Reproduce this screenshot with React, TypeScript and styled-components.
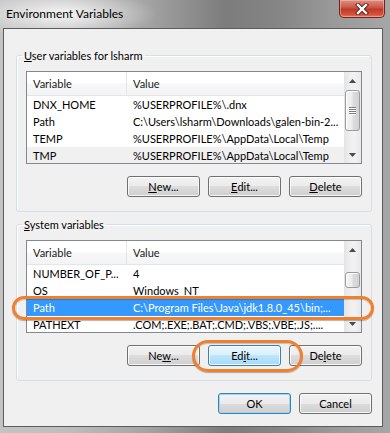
import React from 'react'
import styled, { createGlobalStyle } from 'styled-components'

type RowState = 'selected' | 'inactive'

interface EnvRow {
  name: string
  value: string
  state?: RowState
}

const userVars: EnvRow[] = [
  { name: 'DNX_HOME', value: '%USERPROFILE%\\.dnx' },
  { name: 'Path', value: 'C:\\Users\\lsharm\\Downloads\\galen-bin-2...' },
  { name: 'TEMP', value: '%USERPROFILE%\\AppData\\Local\\Temp' },
  { name: 'TMP', value: '%USERPROFILE%\\AppData\\Local\\Temp', state: 'inactive' },
]

const systemVars: EnvRow[] = [
  { name: 'NUMBER_OF_P...', value: '4' },
  { name: 'OS', value: 'Windows_NT' },
  { name: 'Path', value: 'C:\\Program Files\\Java\\jdk1.8.0_45\\bin;...', state: 'selected' },
  { name: 'PATHEXT', value: '.COM;.EXE;.BAT;.CMD;.VBS;.VBE;.JS;....' },
]

const GlobalStyle = createGlobalStyle`
  html, body {
    margin: 0;
    padding: 0;
  }
  body {
    font-family: Lato, "Liberation Sans", sans-serif;
    font-size: 11px;
    color: #000;
  }
`

function ArrowGlyph({ down }: { down?: boolean }) {
  return (
    <svg width="7" height="4" viewBox="0 0 7 4">
      <path d={down ? 'M0 0H7L3.5 4Z' : 'M0 4H7L3.5 0Z'} fill="#4a4a4a" />
    </svg>
  )
}

function CloseGlyph() {
  return (
    <svg width="14" height="12" viewBox="0 0 14 12">
      <path d="M3 2L11 10M11 2L3 10" stroke="#5a1d14" strokeWidth="4.2" strokeLinecap="square" />
      <path d="M3 2L11 10M11 2L3 10" stroke="#fff" strokeWidth="2.4" strokeLinecap="square" />
    </svg>
  )
}

interface ListProps {
  rows: EnvRow[]
  thumbTop: number
  thumbHeight: number
  grip?: boolean
}

function VariableList({ rows, thumbTop, thumbHeight, grip }: ListProps) {
  return (
    <ListBox>
      <ListBody>
        <HeaderRow>
          <HeaderCell>Variable</HeaderCell>
          <HeaderCell>Value</HeaderCell>
        </HeaderRow>
        {rows.map((row) => (
          <DataRow key={row.name} $state={row.state}>
            <Cell>{row.name}</Cell>
            <Cell>{row.value}</Cell>
          </DataRow>
        ))}
      </ListBody>
      <ScrollBar>
        <ScrollArrow>
          <ArrowGlyph />
        </ScrollArrow>
        <Track>
          <Thumb $top={thumbTop} $height={thumbHeight}>
            {grip && (
              <Grip>
                <span />
                <span />
                <span />
                <span />
              </Grip>
            )}
          </Thumb>
        </Track>
        <ScrollArrow>
          <ArrowGlyph down />
        </ScrollArrow>
      </ScrollBar>
    </ListBox>
  )
}

export default function App() {
  return (
    <>
      <GlobalStyle />
      <Window>
        <TitleBar>
          <Title>Environment Variables</Title>
          <CloseButton>
            <CloseGlyph />
          </CloseButton>
        </TitleBar>

        <Client>
          <Group $gap={19}>
            <GroupLabel>
              <Accel>U</Accel>ser variables for lsharm
            </GroupLabel>
            <VariableList rows={userVars} thumbTop={1} thumbHeight={41} grip />
            <ButtonRow>
              <Button>
                <Accel>N</Accel>ew...
              </Button>
              <Button>
                <Accel>E</Accel>dit...
              </Button>
              <Button>
                <Accel>D</Accel>elete
              </Button>
            </ButtonRow>
          </Group>

          <Group $gap={5}>
            <GroupLabel>
              <Accel>S</Accel>ystem variables
            </GroupLabel>
            <VariableList rows={systemVars} thumbTop={14} thumbHeight={16} />
            <ButtonRow>
              <Button>
                Ne<Accel>w</Accel>...
              </Button>
              <Button $variant="hot">
                Ed<Accel>i</Accel>t...
              </Button>
              <Button>
                De<Accel>l</Accel>ete
              </Button>
            </ButtonRow>
          </Group>

          <Footer>
            <Button $variant="default">OK</Button>
            <Button>Cancel</Button>
          </Footer>
        </Client>

        <Callout $left={12} $top={296} $width={362} $height={24} />
        <Callout $left={192} $top={340} $width={111} $height={32} />
      </Window>
    </>
  )
}

const Window = styled.div`
  position: relative;
  width: 390px;
  height: 433px;
  box-sizing: border-box;
  padding-bottom: 6px;
  display: flex;
  flex-direction: column;
  overflow: hidden;
  background:
    radial-gradient(ellipse 95px 24px at 62px 14px, rgba(255, 255, 255, 0.85), rgba(255, 255, 255, 0) 100%),
    linear-gradient(90deg, #c3c3c3 0%, #bdbdbd 18%, #a3a3a3 38%, #7c7c7c 58%, #868686 72%, #9a9a9a 86%, #a6a6a6 100%);
`

const TitleBar = styled.div`
  height: 28px;
  flex: none;
  display: flex;
  justify-content: space-between;
  align-items: flex-start;
  padding: 0 5px 0 6px;
`

const Title = styled.div`
  margin-top: 6px;
  font-size: 12px;
  line-height: 16px;
  color: #000;
`

const CloseButton = styled.div`
  width: 46px;
  height: 18px;
  box-sizing: border-box;
  display: flex;
  align-items: center;
  justify-content: center;
  border: 1px solid #6e261c;
  border-top: none;
  border-radius: 0 0 5px 5px;
  background: linear-gradient(#dc8f82 0%, #cf5d4d 40%, #c03a29 55%, #d4513c 85%, #e27a62 100%);
  box-shadow: inset 0 0 0 1px rgba(255, 210, 200, 0.45);
`

const Client = styled.div`
  flex: 1;
  margin: 0 7px 0 3px;
  border: 1px solid #5c5c5c;
  background: #f0f0f0;
  padding: 0 10px 0 12px;
  display: flex;
  flex-direction: column;
`

const Group = styled.fieldset<{ $gap: number }>`
  margin: ${({ $gap }) => $gap}px 0 0 0;
  min-width: 0;
  padding: 8px 9px 14px 9px;
  border: 1px solid #d5dfe5;
  border-radius: 3px;
  box-shadow: inset 1px 1px 0 #fff;
`

const GroupLabel = styled.legend`
  padding: 0 2px;
  margin-left: -4px;
  line-height: 15px;
  color: #000;
`

const Accel = styled.span`
  text-decoration: underline;
`

const ListBox = styled.div`
  display: flex;
  height: 93px;
  box-sizing: border-box;
  border: 1px solid #828790;
  background: #fff;
`

const ListBody = styled.div`
  flex: 1;
  min-width: 0;
  overflow: hidden;
`

const HeaderRow = styled.div`
  display: grid;
  grid-template-columns: 100px 1fr;
  height: 24px;
  box-sizing: border-box;
  border-bottom: 1px solid #e5e5e5;
  background: linear-gradient(#ffffff 0%, #ffffff 45%, #f6f7f8 55%, #f3f4f6 100%);
`

const HeaderCell = styled.div`
  padding-left: 6px;
  line-height: 23px;
  color: #1a1a1a;
  &:first-child {
    border-right: 1px solid #e3e5e8;
  }
`

const DataRow = styled.div<{ $state?: RowState }>`
  display: grid;
  grid-template-columns: 100px 1fr;
  height: 17px;
  line-height: 17px;
  background: ${({ $state }) =>
    $state === 'selected' ? '#3399ff' : $state === 'inactive' ? '#f0f0f0' : 'transparent'};
  color: ${({ $state }) => ($state === 'selected' ? '#fff' : '#000')};
`

const Cell = styled.div`
  padding-left: 6px;
  white-space: nowrap;
  overflow: hidden;
  text-overflow: ellipsis;
`

const ScrollBar = styled.div`
  width: 17px;
  flex: none;
  display: flex;
  flex-direction: column;
  background: linear-gradient(90deg, #e4e4e4 0%, #efefef 35%, #f2f2f2 60%, #e8e8e8 100%);
`

const ScrollArrow = styled.div`
  height: 17px;
  flex: none;
  display: flex;
  align-items: center;
  justify-content: center;
`

const Track = styled.div`
  flex: 1;
  overflow: hidden;
`

const Thumb = styled.div<{ $top: number; $height: number }>`
  margin: ${({ $top }) => $top}px 1px 0 1px;
  height: ${({ $height }) => $height}px;
  box-sizing: border-box;
  border: 1px solid #9b9b9b;
  border-radius: 3px;
  background: linear-gradient(90deg, #f5f5f5 0%, #ececec 45%, #dcdcdc 55%, #d2d2d2 100%);
  box-shadow: inset 1px 1px 0 #fff;
  display: flex;
  align-items: center;
  justify-content: center;
`

const Grip = styled.div`
  display: flex;
  flex-direction: column;
  gap: 1px;
  span {
    display: block;
    width: 7px;
    height: 1px;
    background: #7a7a7a;
    box-shadow: 0 1px 0 #fff;
  }
`

const ButtonRow = styled.div`
  display: flex;
  justify-content: flex-end;
  gap: 8px;
  margin-top: 12px;
`

const Footer = styled.div`
  display: flex;
  justify-content: flex-end;
  gap: 8px;
  margin-top: 12px;
`

const Button = styled.div<{ $variant?: 'hot' | 'default' }>`
  width: 73px;
  height: 21px;
  box-sizing: border-box;
  display: flex;
  align-items: center;
  justify-content: center;
  border-radius: 3px;
  color: #000;
  border: 1px solid ${({ $variant }) => ($variant ? '#3c7fb1' : '#707070')};
  background: ${({ $variant }) =>
    $variant === 'hot'
      ? 'linear-gradient(#eaf6fd 0%, #d9f0fc 50%, #bee6fd 50%, #a7d9f5 100%)'
      : 'linear-gradient(#f2f2f2 0%, #ebebeb 50%, #dddddd 50%, #cfcfcf 100%)'};
  box-shadow: inset 0 0 0 1px
    ${({ $variant }) => ($variant === 'default' ? '#9cd7f3' : 'rgba(255, 255, 255, 0.8)')};
`

const Callout = styled.div<{ $left: number; $top: number; $width: number; $height: number }>`
  position: absolute;
  left: ${({ $left }) => $left}px;
  top: ${({ $top }) => $top}px;
  width: ${({ $width }) => $width}px;
  height: ${({ $height }) => $height}px;
  box-sizing: border-box;
  border: 3px solid #f07f2e;
  border-radius: 999px;
  box-shadow: 0 1px 1px rgba(0, 0, 0, 0.3), inset 0 1px 1px rgba(0, 0, 0, 0.2);
  pointer-events: none;
`
